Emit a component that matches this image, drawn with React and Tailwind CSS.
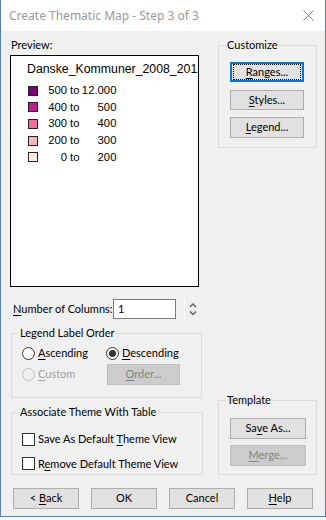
import React from "react";

const ui = { fontFamily: 'Lato, "Liberation Sans", sans-serif' };
const title = { fontFamily: '"Noto Sans", "Liberation Sans", sans-serif' };
const arial = { fontFamily: '"Liberation Sans", Arial, sans-serif' };

function U({ children }) {
  return <span className="underline underline-offset-[2px] decoration-1">{children}</span>;
}

function Btn({ children, className = "", disabled, focused }) {
  if (focused)
    return (
      <div className={`flex items-center justify-center border-2 border-[#0078d7] bg-[#e1e1e1] ${className}`}>
        <div className="flex items-center justify-center w-full h-full m-[1px] border border-dotted border-black">{children}</div>
      </div>
    );
  return (
    <div
      className={`flex items-center justify-center border ${
        disabled ? "border-[#bfbfbf] bg-[#cccccc] text-[#838383]" : "border-[#adadad] bg-[#e1e1e1] text-black"
      } ${className}`}
    >
      {children}
    </div>
  );
}

function Group({ label, className = "", children }) {
  return (
    <div className={`relative border border-[#dcdcdc] ${className}`}>
      <span className="absolute -top-[9px] left-[7px] px-[1px] bg-[#f0f0f0] leading-[16px] whitespace-nowrap">{label}</span>
      {children}
    </div>
  );
}

function Radio({ checked, disabled, children }) {
  return (
    <div className={`flex items-center gap-[3px] whitespace-nowrap ${disabled ? "text-[#a0a0a0]" : ""}`}>
      <div
        className={`flex items-center justify-center w-[13px] h-[13px] rounded-full border ${
          disabled ? "border-[#bcbcbc] bg-[#f0f0f0]" : "border-[#333] bg-white"
        }`}
      >
        {checked && <div className="w-[7px] h-[7px] rounded-full bg-[#333]" />}
      </div>
      <span>{children}</span>
    </div>
  );
}

function Check({ children }) {
  return (
    <div className="flex items-center gap-[3px] whitespace-nowrap">
      <div className="w-[13px] h-[13px] border border-[#333] bg-white" />
      <span>{children}</span>
    </div>
  );
}

const rows = [
  ["#7a0177", "500", "12.000"],
  ["#c51b8a", "400", "500"],
  ["#f768a1", "300", "400"],
  ["#fbb4b9", "200", "300"],
  ["#feebe2", "0", "200"],
];

export default function App() {
  return (
    <div className="w-[326px] h-[520px] bg-white">
      <div className="w-[326px] h-[517px] border-x border-b border-[#5a80b8] bg-[#f0f0f0] text-[11px] text-black flex flex-col" style={ui}>
        <div className="h-[31px] bg-white flex items-center justify-between pl-[8px] pr-[10px]" style={title}>
          <span className="text-[12px] text-[#9a9a9a]">Create Thematic Map - Step 3 of 3</span>
          <svg width="11" height="11" viewBox="0 0 11 11" className="mr-[1px]">
            <path d="M0.5 0.5 L10.5 10.5 M10.5 0.5 L0.5 10.5" stroke="#8a8a8a" strokeWidth="1" />
          </svg>
        </div>

        <div className="flex pl-[9px]">
          <div className="w-[193px] flex flex-col">
            <div className="mt-[6px] h-[16px] leading-[16px] pl-[1px]">Preview:</div>
            <div className="mt-[2px] w-[189px] h-[232px] border border-black bg-white overflow-hidden pl-[16px]" style={arial}>
              <div className="mt-[5px] whitespace-nowrap text-[12.3px] leading-[16px]">Danske_Kommuner_2008_2012</div>
              <div className="mt-[8px] flex flex-col gap-[5.7px] pl-[1px]">
                {rows.map(([c, lo, hi]) => (
                  <div key={lo} className="flex items-center h-[11px] text-[11.3px] whitespace-nowrap">
                    <div className="w-[10px] h-[10px] border border-[#222]" style={{ backgroundColor: c }} />
                    <span className="w-[29px] text-right">{lo}</span>
                    <span className="ml-[3px]">to</span>
                    <span className="w-[37px] text-right">{hi}</span>
                  </div>
                ))}
              </div>
            </div>

            <div className="mt-[12px] h-[20px] flex items-center pl-[3px]">
              <span className="w-[100px] whitespace-nowrap"><U>N</U>umber of Columns:</span>
              <div className="w-[63px] h-[20px] border border-[#7a7a7a] bg-white flex items-center pl-[4px]">1</div>
              <div className="ml-[8px] h-[20px] w-[1px] bg-white" />
              <svg width="10" height="18" viewBox="0 0 10 18" className="ml-[3px]">
                <path d="M2 7 L5 4 L8 7" fill="none" stroke="#606060" strokeWidth="1.5" />
                <path d="M2 11.5 L5 14.5 L8 11.5" fill="none" stroke="#606060" strokeWidth="1.5" />
              </svg>
            </div>

            <Group label="Legend Label Order" className="mt-[14px] ml-[1px] w-[191px] h-[65px]">
              <div className="flex mt-[11px] ml-[10px] h-[16px] items-center">
                <div className="w-[84px]">
                  <Radio><U>A</U>scending</Radio>
                </div>
                <Radio checked><U>D</U>escending</Radio>
              </div>
              <div className="flex mt-[3px] ml-[10px] items-center">
                <div className="w-[85px]">
                  <Radio disabled><U>C</U>ustom</Radio>
                </div>
                <Btn disabled className="w-[73px] h-[21px]"><span><U>O</U>rder...</span></Btn>
              </div>
            </Group>

            <Group label="Associate Theme With Table" className="mt-[14px] ml-[1px] w-[192px] h-[63px]">
              <div className="mt-[18px] ml-[10px] flex flex-col gap-[8px]">
                <Check>Save As Default <U>T</U>heme View</Check>
                <Check>R<U>e</U>move Default Theme View</Check>
              </div>
            </Group>
          </div>

          <div className="ml-[15px] w-[99px] flex flex-col">
            <Group label="Customize" className="mt-[14px] h-[103px] pl-[11px]">
              <Btn focused className="mt-[16px] w-[74px] h-[20px]"><span><U>R</U>anges...</span></Btn>
              <Btn className="mt-[8px] w-[74px] h-[20px]"><span><U>S</U>tyles...</span></Btn>
              <Btn className="mt-[7px] w-[74px] h-[21px]"><span><U>L</U>egend...</span></Btn>
            </Group>
            <Group label="Template" className="mt-auto h-[75px] pl-[11px]">
              <Btn className="mt-[17px] w-[76px] h-[21px]"><span>Sa<U>v</U>e As...</span></Btn>
              <Btn disabled className="mt-[6px] w-[76px] h-[21px]"><span><U>M</U>erge...</span></Btn>
            </Group>
          </div>
        </div>

        <div className="mt-[13px] flex pl-[12px] gap-[12px]">
          <Btn className="w-[66px] h-[21px]"><span>&lt; <U>B</U>ack</span></Btn>
          <Btn className="w-[66px] h-[21px]">OK</Btn>
          <Btn className="w-[66px] h-[21px]">Cancel</Btn>
          <Btn className="w-[66px] h-[21px]"><span><U>H</U>elp</span></Btn>
        </div>
      </div>
    </div>
  );
}
